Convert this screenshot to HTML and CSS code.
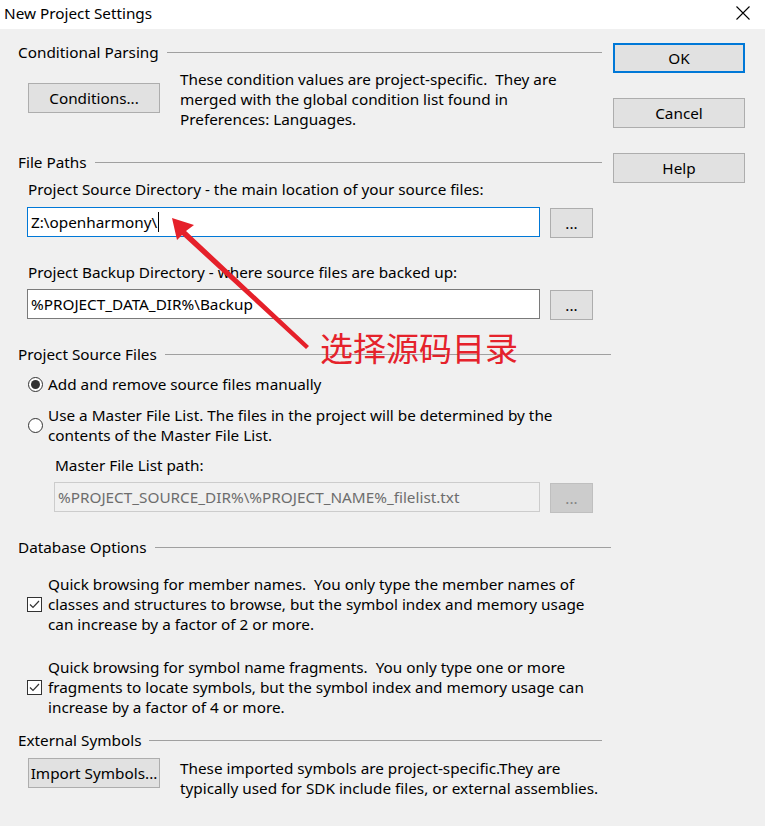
FILE: index.html
```html
<!DOCTYPE html>
<html>
<head>
<meta charset="utf-8">
<link rel="stylesheet" href="styles.css">
</head>
<body>
<div class="dialog">
  <div class="titlebar">
    <span class="title">New Project Settings</span>
    <svg class="close" width="14" height="14" viewBox="0 0 14 14"><path d="M0.5 0.5 L13.5 13.5 M13.5 0.5 L0.5 13.5" stroke="#000" stroke-width="1.1" fill="none"/></svg>
  </div>
  <div class="content">
    <div class="main">
      <div class="group-head short">Conditional Parsing</div>
      <div class="btn-row r1">
        <div class="btn">Conditions...</div>
        <div class="desc">These condition values are project-specific.&nbsp; They are<br>merged with the global condition list found in<br>Preferences: Languages.</div>
      </div>

      <div class="group-head short g2">File Paths</div>
      <div class="label l1">Project Source Directory - the main location of your source files:</div>
      <div class="field-row f1">
        <div class="input focus">Z:\openharmony\<span class="caret"></span></div>
        <div class="btn small">...</div>
      </div>
      <div class="label l2">Project Backup Directory - where source files are backed up:</div>
      <div class="field-row f2">
        <div class="input">%PROJECT_DATA_DIR%\Backup</div>
        <div class="btn small">...</div>
      </div>

      <div class="group-head g3">Project Source Files</div>
      <div class="option o1">
        <span class="radio checked"></span>
        <span class="opt-text">Add and remove source files manually</span>
      </div>
      <div class="option o2">
        <span class="radio"></span>
        <span class="opt-text">Use a Master File List. The files in the project will be determined by the<br>contents of the Master File List.</span>
      </div>
      <div class="label sub">Master File List path:</div>
      <div class="field-row f3">
        <div class="input disabled">%PROJECT_SOURCE_DIR%\%PROJECT_NAME%_filelist.txt</div>
        <div class="btn small disabled">...</div>
      </div>

      <div class="group-head g4">Database Options</div>
      <div class="option c1">
        <span class="check"><svg width="13" height="13" viewBox="0 0 13 13"><path d="M2 6.5 L5 9.5 L11 3" stroke="#333" stroke-width="1.2" fill="none"/></svg></span>
        <span class="opt-text">Quick browsing for member names.&nbsp; You only type the member names of<br>classes and structures to browse, but the symbol index and memory usage<br>can increase by a factor of 2 or more.</span>
      </div>
      <div class="option c2">
        <span class="check"><svg width="13" height="13" viewBox="0 0 13 13"><path d="M2 6.5 L5 9.5 L11 3" stroke="#333" stroke-width="1.2" fill="none"/></svg></span>
        <span class="opt-text">Quick browsing for symbol name fragments.&nbsp; You only type one or more<br>fragments to locate symbols, but the symbol index and memory usage can<br>increase by a factor of 4 or more.</span>
      </div>

      <div class="group-head short g5">External Symbols</div>
      <div class="btn-row r2">
        <div class="btn">Import Symbols...</div>
        <div class="desc">These imported symbols are project-specific.They are<br>typically used for SDK include files, or external assemblies.</div>
      </div>
    </div>
    <div class="side">
      <div class="btn default">OK</div>
      <div class="btn">Cancel</div>
      <div class="btn">Help</div>
    </div>
  </div>

  <svg class="arrow" width="765" height="826" viewBox="0 0 765 826">
    <polygon points="172,218 194,225 186,231 309,346 306,349 182,235 177,240" fill="#e5202a"/>
  </svg>
  <div class="note">选择源码目录</div>
</div>
</body>
</html>
```

FILE: styles.css
```css
* { box-sizing: border-box; }
html, body { margin: 0; padding: 0; }
body {
  font-family: "Noto Sans", "Noto Sans CJK SC", sans-serif;
  font-size: 15.3px;
  color: #000;
  background: #f0f0f0;
}
.dialog {
  position: relative;
  width: 765px;
  height: 826px;
  background: #f0f0f0;
  overflow: hidden;
}
.titlebar {
  height: 29px;
  background: #fff;
  display: flex;
  align-items: center;
  justify-content: space-between;
  padding: 0 15px 0 4px;
}
.title { line-height: 20px; margin-top: -3px; }
.close { margin-top: -3px; }

.content { display: flex; }
.main {
  width: 611px;
  padding: 13px 0 0 18px;
}
.side {
  display: flex;
  flex-direction: column;
  gap: 25px;
  padding-top: 14px;
  margin-left: 2px;
}

.group-head {
  display: flex;
  align-items: center;
  height: 20px;
  line-height: 20px;
  white-space: nowrap;
}
.group-head::after {
  content: "";
  flex: 1;
  border-top: 1px solid #a0a0a0;
  margin-left: 8px;
  margin-top: 1px;
}
.group-head.short { margin-right: 9px; }
.g2 { margin-top: 23px; }
.g3 { margin-top: 24px; }
.g4 { margin-top: 24px; }
.g5 { margin-top: 13px; }

.btn {
  width: 132px;
  height: 30px;
  background: #e1e1e1;
  border: 1px solid #adadad;
  display: flex;
  align-items: center;
  justify-content: center;
  line-height: 20px;
  flex-shrink: 0;
}
.btn.default { border: 2px solid #0078d7; }
.btn.small { width: 43px; margin-top: 1px; }
.btn.disabled { background: #cccccc; border-color: #bfbfbf; color: #838383; }

.btn-row {
  display: flex;
  align-items: flex-start;
  padding-left: 10px;
  gap: 20px;
  line-height: 20px;
}
.btn-row .btn { margin-top: 14px; }
.r1 { margin-top: 7px; }
.r2 { margin-top: 8px; }
.r2 .btn { margin-top: 0; }

.label { line-height: 20px; padding-left: 10px; }
.l1 { margin-top: 7px; }
.l2 { margin-top: 24px; }
.label.sub { padding-left: 37px; margin-top: 10px; }

.field-row {
  display: flex;
  align-items: flex-start;
  gap: 10px;
  padding-left: 9px;
}
.f1 { margin-top: 8px; }
.f2 { margin-top: 7px; }
.f3 { margin-top: 7px; padding-left: 36px; }

.input {
  width: 513px;
  height: 30px;
  background: #fff;
  border: 1px solid #7a7a7a;
  padding: 0 3px;
  display: flex;
  align-items: center;
  line-height: 20px;
  white-space: nowrap;
}
.f3 .input { width: 486px; }
.input.focus { border-color: #0078d7; }
.input.disabled { background: #f0f0f0; border-color: #cccccc; color: #6d6d6d; }
.caret {
  display: inline-block;
  width: 1px;
  height: 20px;
  background: #000;
  margin-left: 1px;
}

.option {
  display: flex;
  align-items: center;
  padding-left: 9px;
  line-height: 20px;
}
.o1 { margin-top: 10px; }
.o2 { margin-top: 11px; }
.c1 { margin-top: 17px; }
.c2 { margin-top: 23px; }
.opt-text { margin-left: 5px; }

.radio {
  width: 15px;
  height: 15px;
  border: 1px solid #333;
  border-radius: 50%;
  background: #fff;
  display: flex;
  align-items: center;
  justify-content: center;
  flex-shrink: 0;
  margin-left: 1px;
}
.radio.checked::after {
  content: "";
  width: 9px;
  height: 9px;
  border-radius: 50%;
  background: #333;
}
.check {
  width: 15px;
  height: 15px;
  border: 1px solid #333;
  background: #fff;
  display: flex;
  align-items: center;
  justify-content: center;
  flex-shrink: 0;
  margin-right: 1px;
}
.check svg { display: block; }

.arrow {
  position: absolute;
  left: 0;
  top: 0;
  pointer-events: none;
}
.note {
  position: absolute;
  left: 320px;
  top: 326px;
  font-family: "Noto Sans CJK SC", sans-serif;
  font-size: 33px;
  line-height: 42px;
  color: #e5222b;
}
```
